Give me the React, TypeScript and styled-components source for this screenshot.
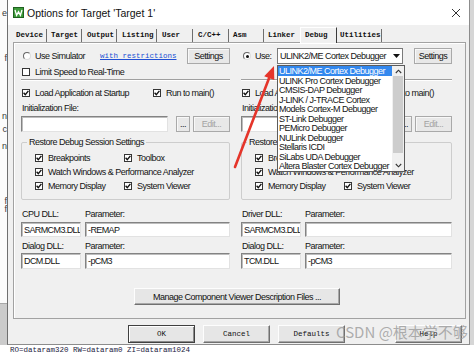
import React from "react";
import styled, { createGlobalStyle } from "styled-components";

const UI = `"Liberation Sans", Arial, sans-serif`;
const MONO = `"Liberation Mono", "Courier New", monospace`;

const GlobalStyle = createGlobalStyle`
  html, body { margin: 0; padding: 0; }
  body { width: 474px; height: 353px; overflow: hidden; background: #f0f0f0; }
  #root { width: 474px; height: 353px; }
  *, *::before, *::after { box-sizing: border-box; }
`;

const Page = styled.div`
  position: relative;
  width: 474px;
  height: 353px;
  display: flex;
  flex-direction: column;
  overflow: hidden;
  background: #fff;
  font-family: ${UI};
`;

const Main = styled.div`
  display: flex;
  height: 345px;
  flex: none;
`;

const IdeGutter = styled.div`
  width: 7px;
  flex: none;
  display: flex;
  flex-direction: column;
  background: #fbfbfb;
  overflow: hidden;
`;

const GutterChar = styled.span<{ $top: number }>`
  display: block;
  margin-top: ${(p) => p.$top}px;
  height: 8px;
  line-height: 8px;
  font: 9px ${UI};
  color: #3a3a3a;
  text-align: right;
  white-space: nowrap;
`;

const GutterShade = styled.div`
  margin-top: auto;
  height: 42px;
  background: #cbcbcb;
  border-top: 1px solid #a8a8a8;
`;

const IdeRight = styled.div`
  width: 4px;
  flex: none;
  background: #d6d6d6;
`;

const Dialog = styled.div`
  width: 463px;
  flex: none;
  display: flex;
  flex-direction: column;
  background: #f0f0f0;
  border-left: 1px solid #6f6f6f;
  border-right: 1px solid #8c8c8c;
  border-bottom: 1px solid #8c8c8c;
  padding-bottom: 1px;
`;

const TitleBar = styled.div`
  height: 25px;
  flex: none;
  background: #fff;
  display: flex;
  align-items: center;
  padding: 0 8px 0 5px;
`;

const TitleText = styled.span`
  flex: 1;
  margin-left: 3px;
  font: 10.5px ${UI};
  color: #111;
  white-space: nowrap;
`;

const TabRow = styled.div`
  height: 17px;
  flex: none;
  display: flex;
  align-items: flex-end;
  padding-left: 6px;
`;

const Tab = styled.div<{ $w: number; $active?: boolean; $noEdge?: boolean; $pad?: number }>`
  width: ${(p) => p.$w}px;
  flex: none;
  height: ${(p) => (p.$active ? 16 : 13)}px;
  padding-left: ${(p) => p.$pad ?? 4}px;
  font: 700 7.5px ${MONO};
  line-height: ${(p) => (p.$active ? 14 : 12)}px;
  color: #111;
  white-space: nowrap;
  border-right: 1px solid ${(p) => (p.$noEdge ? "transparent" : p.$active ? "#3a3a3a" : "#6e6e6e")};
  border-left: ${(p) => (p.$active ? "1px solid #ffffff" : "none")};
  border-top: ${(p) => (p.$active ? "1px solid #ffffff" : "none")};
  margin-bottom: ${(p) => (p.$active ? -1 : 0)}px;
  background: #f0f0f0;
  position: relative;
  z-index: ${(p) => (p.$active ? 2 : 1)};
`;

const Panel = styled.div`
  height: 277px;
  flex: none;
  margin: 0 3px 0 5px;
  border: 1px solid #a2a2a2;
  box-shadow: inset 1px 1px 0 #ffffff;
  padding: 5px 13px 0 7px;
  display: flex;
  flex-direction: column;
`;

const Columns = styled.div`
  display: flex;
  gap: 11px;
`;

const Column = styled.div<{ $w: number }>`
  width: ${(p) => p.$w}px;
  flex: none;
  display: flex;
  flex-direction: column;
`;

const Row = styled.div<{ $h: number; $mt?: number; $pl?: number }>`
  display: flex;
  align-items: center;
  height: ${(p) => p.$h}px;
  margin-top: ${(p) => p.$mt ?? 0}px;
  padding-left: ${(p) => p.$pl ?? 0}px;
  flex: none;
`;

const Rule = styled.div`
  margin-top: 2px;
  height: 2px;
  flex: none;
  border-top: 1px solid #a0a0a0;
  border-bottom: 1px solid #ffffff;
`;

const Text = styled.span<{ $muted?: boolean }>`
  font: 9px ${UI};
  letter-spacing: -0.5px;
  color: ${(p) => (p.$muted ? "#a3a3a3" : "#141414")};
  white-space: nowrap;
`;

const Option = styled.label<{ $w?: number; $gap?: number }>`
  display: flex;
  align-items: center;
  gap: ${(p) => p.$gap ?? 5}px;
  flex: none;
  ${(p) => (p.$w ? `width: ${p.$w}px;` : "")}
`;

const Box = styled.span`
  width: 8px;
  height: 8px;
  flex: none;
  border: 1px solid #353535;
  background: #fff;
  display: flex;
  align-items: center;
  justify-content: center;
`;

const RadioCircle = styled.span<{ $on?: boolean }>`
  width: 8px;
  height: 8px;
  flex: none;
  border-radius: 50%;
  border: 1px solid;
  border-color: #666 #dcdcdc #dcdcdc #666;
  background: #fff;
  display: flex;
  align-items: center;
  justify-content: center;
  &::after {
    content: "";
    width: 3px;
    height: 3px;
    border-radius: 50%;
    background: ${(p) => (p.$on ? "#111" : "transparent")};
  }
`;

const Link = styled.a`
  font: 7.5px ${MONO};
  color: #2150d4;
  text-decoration: underline;
  white-space: nowrap;
  cursor: pointer;
`;

const Btn = styled.button<{ $w: number; $h?: number; $mono?: boolean; $ml?: number; $default?: boolean }>`
  width: ${(p) => p.$w}px;
  height: ${(p) => p.$h ?? 16}px;
  flex: none;
  margin: 0 0 0 ${(p) => p.$ml ?? 0}px;
  padding: 0;
  background: #e6e6e6;
  border: 1px solid;
  border-color: ${(p) => (p.$default ? "#404040" : "#fdfdfd #707070 #707070 #fdfdfd")};
  box-shadow: ${(p) =>
    p.$default ? "inset 1px 1px 0 #fff, inset -1px -1px 0 #8a8a8a" : "inset -1px -1px 0 #a8a8a8"};
  font: ${(p) => (p.$mono ? `7.5px ${MONO}` : `9px ${UI}`)};
  letter-spacing: ${(p) => (p.$mono ? "0" : "-0.5px")};
  color: #111;
  white-space: nowrap;
  overflow: hidden;
`;

const SoftBtn = styled(Btn)`
  background: #e8e8e8;
  border: 1px solid #a9a9a9;
  box-shadow: inset 1px 1px 0 #f8f8f8;
`;

const Field = styled.div<{ $w?: number; $h?: number }>`
  height: ${(p) => p.$h ?? 16}px;
  ${(p) => (p.$w ? `width: ${p.$w}px; flex: none;` : "flex: 1;")}
  background: #fff;
  border: 1px solid;
  border-color: #838383 #e2e2e2 #e2e2e2 #838383;
  box-shadow: inset 1px 1px 0 #bdbdbd;
  padding: 0 0 0 2px;
  display: flex;
  align-items: center;
  font: 9px ${UI};
  letter-spacing: -0.6px;
  color: #141414;
  white-space: nowrap;
  overflow: hidden;
`;

const Group = styled.fieldset`
  margin: 5px 0 0 0;
  padding: 4px 0 6px 0;
  border: 1px solid #cdcdcd;
  border-radius: 2px;
  min-width: 0;
  flex: none;
`;

const Legend = styled.legend`
  margin-left: 5px;
  padding: 0 2px;
  font: 9px/10px ${UI};
  letter-spacing: -0.5px;
  color: #141414;
`;

const GroupRow = styled.div`
  display: flex;
  align-items: center;
  height: 14px;
  padding-left: 13px;
`;

const Select = styled.div`
  position: relative;
  width: 126px;
  height: 16px;
  flex: none;
  background: #fff;
  border: 1px solid #7a7a7a;
  display: flex;
  align-items: center;
  padding-left: 2px;
`;

const SelectArrow = styled.span`
  margin-left: auto;
  width: 11px;
  height: 100%;
  display: flex;
  align-items: center;
  justify-content: center;
`;

const DropList = styled.div`
  position: absolute;
  top: 16px;
  left: -1px;
  width: 128px;
  background: #fff;
  border: 1px solid #5c5c5c;
  display: flex;
  z-index: 5;
`;

const Items = styled.div`
  flex: 1;
  display: flex;
  flex-direction: column;
  overflow: hidden;
`;

const Item = styled.div<{ $sel?: boolean }>`
  height: 9.5px;
  line-height: 9.5px;
  padding-left: 1px;
  font: 9px ${UI};
  letter-spacing: -0.5px;
  white-space: nowrap;
  color: ${(p) => (p.$sel ? "#fff" : "#141414")};
  background: ${(p) => (p.$sel ? "#3388ee" : "transparent")};
`;

const ScrollBar = styled.div`
  width: 12px;
  flex: none;
  display: flex;
  flex-direction: column;
  background: #f0f0f0;
`;

const ScrollBtn = styled.div`
  height: 10px;
  flex: none;
  display: flex;
  align-items: center;
  justify-content: center;
`;

const Thumb = styled.div`
  height: 77px;
  flex: none;
  margin: 0 1px;
  background: #cdcdcd;
`;

const ButtonRow = styled.div`
  height: 18px;
  flex: none;
  margin-top: 6px;
  padding-right: 7px;
  display: flex;
  justify-content: flex-end;
  gap: 8px;
`;

const StatusLine = styled.div`
  height: 8px;
  flex: none;
  overflow: hidden;
  background: #fff;
  padding-left: 10px;
  font: 7.5px/10px ${MONO};
  color: #1a2040;
  white-space: pre;
`;

const Annotation = styled.svg`
  position: absolute;
  left: 0;
  top: 0;
  width: 474px;
  height: 353px;
  pointer-events: none;
  z-index: 10;
`;

const Watermark = styled.div`
  position: absolute;
  left: 336px;
  top: 323px;
  font: 15px/18px "Noto Sans CJK SC", "Liberation Sans", sans-serif;
  color: rgba(150, 150, 150, 0.75);
  white-space: nowrap;
  z-index: 11;
  pointer-events: none;
`;

const Check = ({ on }: { on: boolean }) => (
  <Box>
    {on && (
      <svg width="6" height="6" viewBox="0 0 6 6">
        <path d="M0.6 2.7 L2.3 4.6 L5.4 0.9" stroke="#111" strokeWidth="1.4" fill="none" />
      </svg>
    )}
  </Box>
);

const CheckOption = ({ label, w, on = true }: { label: string; w?: number; on?: boolean }) => (
  <Option $w={w}>
    <Check on={on} />
    <Text>{label}</Text>
  </Option>
);

type ColumnProps = {
  width: number;
  useOn: boolean;
  useLabel: string;
  useLabelWidth: number;
  settingsWidth: number;
  showLimit: boolean;
  dllLabel: string;
  dllValue: string;
  dllParam: string;
  dialogValue: string;
  dialogParam: string;
  children?: React.ReactNode;
};

const DebugColumn = ({
  width,
  useOn,
  useLabel,
  useLabelWidth,
  settingsWidth,
  showLimit,
  dllLabel,
  dllValue,
  dllParam,
  dialogValue,
  dialogParam,
  children,
}: ColumnProps) => (
  <Column $w={width}>
    <Row $h={16} $pl={2}>
      <Option $w={useLabelWidth - 2} $gap={4}>
        <RadioCircle $on={useOn} />
        <Text>{useLabel}</Text>
      </Option>
      {children}
      <SoftBtn $w={settingsWidth} style={{ marginLeft: "auto" }}>
        Settings
      </SoftBtn>
    </Row>
    <Row $h={11} $mt={2} $pl={1}>
      {showLimit && <CheckOption label="Limit Speed to Real-Time" on={false} />}
    </Row>
    <Rule />
    <Row $h={12} $mt={6} $pl={1}>
      <CheckOption label="Load Application at Startup" w={131} />
      <CheckOption label="Run to main()" />
    </Row>
    <Row $h={12} $mt={3} $pl={1}>
      <Text>Initialization File:</Text>
    </Row>
    <Row $h={16} $mt={2}>
      <Field />
      <SoftBtn $w={14} $ml={8}>
        ...
      </SoftBtn>
      <SoftBtn $w={37} $ml={3}>
        <Text $muted>Edit...</Text>
      </SoftBtn>
    </Row>
    <Group>
      <Legend>Restore Debug Session Settings</Legend>
      <GroupRow>
        <CheckOption label="Breakpoints" w={89} />
        <CheckOption label="Toolbox" />
      </GroupRow>
      <GroupRow>
        <CheckOption label="Watch Windows & Performance Analyzer" />
      </GroupRow>
      <GroupRow>
        <CheckOption label="Memory Display" w={89} />
        <CheckOption label="System Viewer" />
      </GroupRow>
    </Group>
    <Row $h={12} $mt={8} $pl={1}>
      <Text style={{ width: 63 }}>{dllLabel}</Text>
      <Text>Parameter:</Text>
    </Row>
    <Row $h={15} $mt={2}>
      <Field $w={60} $h={15}>{dllValue}</Field>
      <Field $h={15} style={{ marginLeft: 4 }}>
        {dllParam}
      </Field>
    </Row>
    <Row $h={12} $mt={3} $pl={1}>
      <Text style={{ width: 63 }}>Dialog DLL:</Text>
      <Text>Parameter:</Text>
    </Row>
    <Row $h={16} $mt={1}>
      <Field $w={60}>{dialogValue}</Field>
      <Field style={{ marginLeft: 4 }}>{dialogParam}</Field>
    </Row>
  </Column>
);

const debuggers = [
  "ULINK2/ME Cortex Debugger",
  "ULINK Pro Cortex Debugger",
  "CMSIS-DAP Debugger",
  "J-LINK / J-TRACE Cortex",
  "Models Cortex-M Debugger",
  "ST-Link Debugger",
  "PEMicro Debugger",
  "NULink Debugger",
  "Stellaris ICDI",
  "SiLabs UDA Debugger",
  "Altera Blaster Cortex Debugger",
];

const tabs: { label: string; w: number; pad?: number; active?: boolean; noEdge?: boolean }[] = [
  { label: "Device", w: 33, pad: 2 },
  { label: "Target", w: 35 },
  { label: "Output", w: 35, pad: 5 },
  { label: "Listing", w: 40, pad: 5 },
  { label: "User", w: 36, pad: 5 },
  { label: "C/C++", w: 36, pad: 5 },
  { label: "Asm", w: 35 },
  { label: "Linker", w: 36, noEdge: true },
  { label: "Debug", w: 37, pad: 4, active: true },
  { label: "Utilities", w: 45, pad: 3 },
];

export default function App() {
  return (
    <>
      <GlobalStyle />
      <Page>
        <Main>
          <IdeGutter>
            <GutterChar $top={8}>e</GutterChar>
            <GutterChar $top={37}>f</GutterChar>
            <GutterChar $top={50}>n</GutterChar>
            <GutterChar $top={5}>c</GutterChar>
            <GutterChar $top={9}>n</GutterChar>
            <GutterChar $top={47}>f</GutterChar>
            <GutterChar $top={0}>f</GutterChar>
            <GutterShade />
          </IdeGutter>
          <Dialog>
            <TitleBar>
              <svg width="11" height="11" viewBox="0 0 11 11">
                <rect x="0.5" y="0.5" width="10" height="10" fill="#3d9b3a" stroke="#1f6120" />
                <path d="M2 3 L3.6 8.2 L5.5 4.6 L7.4 8.2 L9 3" stroke="#fff" strokeWidth="1.3" fill="none" />
              </svg>
              <TitleText>Options for Target 'Target 1'</TitleText>
              <svg width="10" height="10" viewBox="0 0 10 10">
                <path d="M1 1 L9 9 M9 1 L1 9" stroke="#333" strokeWidth="1" />
              </svg>
            </TitleBar>
            <TabRow>
              {tabs.map((t) => (
                <Tab key={t.label} $w={t.w} $pad={t.pad} $active={t.active} $noEdge={t.noEdge}>
                  {t.label}
                </Tab>
              ))}
            </TabRow>
            <Panel>
              <Columns>
                <DebugColumn
                  width={209}
                  useOn={false}
                  useLabel="Use Simulator"
                  useLabelWidth={79}
                  settingsWidth={43}
                  showLimit
                  dllLabel="CPU DLL:"
                  dllValue="SARMCM3.DLL"
                  dllParam="-REMAP"
                  dialogValue="DCM.DLL"
                  dialogParam="-pCM3"
                >
                  <Link>with restrictions</Link>
                </DebugColumn>
                <DebugColumn
                  width={211}
                  useOn
                  useLabel="Use:"
                  useLabelWidth={36}
                  settingsWidth={38}
                  showLimit={false}
                  dllLabel="Driver DLL:"
                  dllValue="SARMCM3.DLL"
                  dllParam=""
                  dialogValue="TCM.DLL"
                  dialogParam="-pCM3"
                >
                  <Select>
                    <Text>ULINK2/ME Cortex Debugger</Text>
                    <SelectArrow>
                      <svg width="7" height="4" viewBox="0 0 7 4">
                        <path d="M0 0 L7 0 L3.5 4 Z" fill="#111" />
                      </svg>
                    </SelectArrow>
                    <DropList>
                      <Items>
                        {debuggers.map((d, i) => (
                          <Item key={d} $sel={i === 0}>
                            {d}
                          </Item>
                        ))}
                      </Items>
                      <ScrollBar>
                        <ScrollBtn>
                          <svg width="7" height="5" viewBox="0 0 7 5">
                            <path d="M0.8 4 L3.5 1.2 L6.2 4" stroke="#333" strokeWidth="1.1" fill="none" />
                          </svg>
                        </ScrollBtn>
                        <Thumb />
                        <div style={{ flex: 1 }} />
                        <ScrollBtn>
                          <svg width="7" height="5" viewBox="0 0 7 5">
                            <path d="M0.8 1 L3.5 3.8 L6.2 1" stroke="#333" strokeWidth="1.1" fill="none" />
                          </svg>
                        </ScrollBtn>
                      </ScrollBar>
                    </DropList>
                  </Select>
                </DebugColumn>
              </Columns>
              <Btn $w={206} $h={17} $ml={113} style={{ marginTop: 19 }}>
                Manage Component Viewer Description Files ...
              </Btn>
            </Panel>
            <ButtonRow>
              <Btn $w={67} $h={18} $mono $default>
                OK
              </Btn>
              <Btn $w={67} $h={18} $mono>
                Cancel
              </Btn>
              <Btn $w={67} $h={18} $mono>
                Defaults
              </Btn>
              <Btn $w={67} $h={18} $mono $ml={42}>
                Help
              </Btn>
            </ButtonRow>
          </Dialog>
          <IdeRight />
        </Main>
        <StatusLine>RO=dataram320 RW=dataram0 ZI=dataram1024</StatusLine>
        <Annotation viewBox="0 0 474 353">
          <line x1="235" y1="167" x2="269.5" y2="77" stroke="#e5352a" strokeWidth="2.6" strokeLinecap="round" />
          <polygon points="274,66 274.3,80 264.2,76.3" fill="#e5352a" />
        </Annotation>
        <Watermark>CSDN @根本学不够</Watermark>
      </Page>
    </>
  );
}
